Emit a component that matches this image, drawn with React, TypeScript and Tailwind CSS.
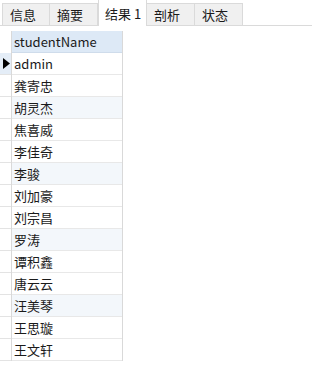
const tabs = ["信息", "摘要", "结果 1", "剖析", "状态"];
const names = [
  "admin",
  "龚寄忠",
  "胡灵杰",
  "焦喜威",
  "李佳奇",
  "李骏",
  "刘加豪",
  "刘宗昌",
  "罗涛",
  "谭积鑫",
  "唐云云",
  "汪美琴",
  "王思璇",
  "王文轩",
];

export default function App() {
  return (
    <div
      className="h-[375px] w-[312px] overflow-hidden bg-white text-[13px] text-[#1a1a1a]"
      style={{ fontFamily: '"Noto Sans CJK SC", "Liberation Sans", sans-serif' }}
    >
      {/* tab strip */}
      <div className="flex h-[26px] items-end border-b border-[#dadada] pl-[2px]">
        {tabs.map((t) => {
          const active = t === "结果 1";
          return (
            <div
              key={t}
              className={
                active
                  ? "-mb-px flex h-[27px] w-[49px] items-center border-x border-t border-[#dadada] bg-white pl-[6px] pt-[1px]"
                  : "flex h-[22px] w-[48px] items-center border-r border-t border-[#dadada] bg-[#f0f0f0] pl-[7px] pt-[1px] first:border-l"
              }
            >
              {t}
            </div>
          );
        })}
      </div>

      {/* result grid */}
      <div className="mt-[5px] flex">
        <div className="w-[11px]">
          <div className="h-[22px]" />
          {names.map((n, i) => (
            <div
              key={n}
              className={`flex h-[22px] items-center border-b border-[#e3e3e3] ${i === 0 ? "bg-[#e4edf7]" : "bg-white"}`}
            >
              {i === 0 && (
                <svg width="7" height="11" viewBox="0 0 7 11" className="ml-[3px]">
                  <path d="M0 0 L7 5.5 L0 11 Z" fill="#000" />
                </svg>
              )}
            </div>
          ))}
        </div>
        <div className="w-[112px] border-x border-[#d9d9d9]">
          <div className="flex h-[22px] items-center border-b border-[#cfdceb] bg-[#dde9f6] pl-[2px]">
            studentName
          </div>
          {names.map((n, i) => (
            <div
              key={n}
              className={`flex h-[22px] items-center border-b border-[#e8e8e8] pl-[2px] ${i % 3 === 2 ? "bg-[#f3f7fb]" : "bg-white"}`}
            >
              {n}
            </div>
          ))}
        </div>
      </div>
    </div>
  );
}
